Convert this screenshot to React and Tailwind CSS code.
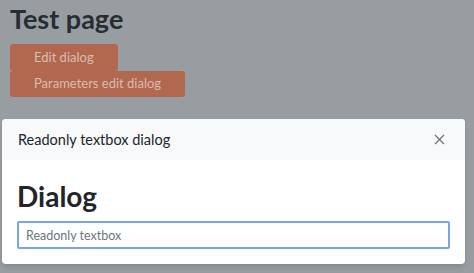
export default function App() {
  return (
    <div
      className="relative h-[273px] w-[474px] overflow-hidden bg-[#989da1]"
      style={{ fontFamily: '"Lato", "Open Sans", sans-serif' }}
    >
      {/* page content, dimmed by the modal backdrop */}
      <div className="px-[10px] pt-[2px]">
        <h1 className="text-[27px] font-bold leading-[34px] text-[#282d34]">Test page</h1>
        <div className="mt-[8px] flex flex-col items-start">
          <button className="h-[27px] rounded-[3px] bg-[#b2684f] px-[24px] text-[13px] text-[#d9bcb2]">
            Edit dialog
          </button>
          <button className="h-[26px] rounded-[3px] bg-[#b2684f] px-[24px] text-[13px] text-[#d9bcb2]">
            Parameters edit dialog
          </button>
        </div>
      </div>

      {/* dialog */}
      <div className="absolute left-[2px] top-[119px] w-[463px] overflow-hidden rounded-[4px] bg-white shadow-md">
        <div className="flex h-[41px] items-center justify-between bg-[#f8f9fa] pl-[16px] pr-[20px]">
          <span className="text-[14.5px] text-[#212529]">Readonly textbox dialog</span>
          <svg width="11" height="11" viewBox="0 0 11 11" className="text-[#6c757d]">
            <path d="M1 1L10 10M10 1L1 10" stroke="currentColor" strokeWidth="1.3" />
          </svg>
        </div>
        <div className="px-[15px] pb-[15px] pt-[19px]">
          <h2 className="text-[28px] font-bold leading-[35px] text-[#212529]">Dialog</h2>
          <input
            readOnly
            placeholder="Readonly textbox"
            className="mt-[7px] h-[28px] w-full rounded-[2px] border-2 border-[#7aa4e8] px-[7px] text-[12.5px] text-[#495057] outline-none placeholder:text-[#6c757d]"
          />
        </div>
      </div>
    </div>
  );
}
